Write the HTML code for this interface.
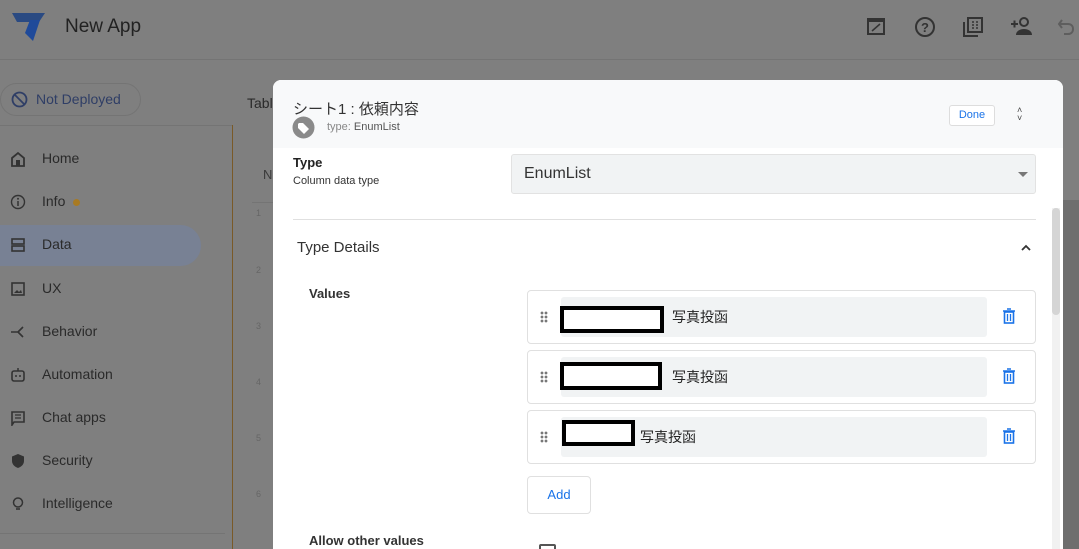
<!DOCTYPE html>
<html><head><meta charset="utf-8"><style>
*{box-sizing:border-box;margin:0;padding:0}
body{width:1079px;height:549px;overflow:hidden;background:#7f7f7f;font-family:"Liberation Sans","Noto Sans CJK JP",sans-serif;position:relative;color:#202124}
.abs{position:absolute}
.nav{position:absolute;left:42px;font-size:14px;color:#2a2a2a}
.ni{position:absolute;left:10px;width:16px;height:16px}
.card{position:absolute;left:527px;width:509px;height:54px;border:1px solid #e0e0e0;border-radius:4px;background:#fff}
.field{position:absolute;left:33px;top:6px;width:426px;height:40px;background:#f1f3f4;border-radius:3px}
.red{position:absolute;border:4px solid #000;background:#fff}
.jp{position:absolute;font-size:14px;color:#222;top:16px}
.dots{position:absolute;left:12px;top:20px;width:8px;height:12px;background-image:radial-gradient(circle,#777 1.3px,transparent 1.5px);background-size:4px 4px}
.trash{position:absolute;left:474px;top:17px}
</style></head><body>
<svg class="abs" style="left:12px;top:13px" width="34" height="30" viewBox="0 0 34 30"><path d="M0 0H33L27 9H5Z" fill="#2a4a82"/><path d="M18 7H28L21 28L13 20Z" fill="#1f4a9a"/></svg>
<div class="abs" style="left:65px;top:16px;font-size:19px;color:#222">New App</div>
<div class="abs" style="left:0;top:59px;width:1079px;height:1px;background:#747474"></div>
<svg class="abs" style="left:866px;top:16px" width="20" height="20"><rect x="2" y="3" width="16" height="15" fill="none" stroke="#333" stroke-width="2"/><rect x="2" y="3" width="16" height="3" fill="#333"/><path d="M6 15L14 8" stroke="#333" stroke-width="1.5"/></svg>
<svg class="abs" style="left:914px;top:16px" width="22" height="22"><circle cx="11" cy="11" r="9" fill="none" stroke="#333" stroke-width="2"/><text x="11" y="16" font-size="13" text-anchor="middle" fill="#333" font-family="Liberation Sans" font-weight="bold">?</text></svg>
<svg class="abs" style="left:962px;top:16px" width="22" height="22"><rect x="6" y="2" width="14" height="14" fill="none" stroke="#333" stroke-width="2"/><path d="M2 6V20H16" fill="none" stroke="#333" stroke-width="2"/><path d="M10 6h2M14 6h2M10 9h2M14 9h2M10 12h2M14 12h2" stroke="#333" stroke-width="1.5"/></svg>
<svg class="abs" style="left:1009px;top:16px" width="24" height="20"><path d="M2 8h7M5.5 4.5v7" stroke="#333" stroke-width="2"/><circle cx="15" cy="6" r="4" fill="none" stroke="#333" stroke-width="2"/><path d="M7 19c0-4 4-6 8-6s8 2 8 6z" fill="#333"/></svg>
<svg class="abs" style="left:1057px;top:17px" width="18" height="18"><path d="M5 3L2 7L5 11M2 7H11C14 7 16 9 16 12C16 15 14 17 11 17H7" fill="none" stroke="#5e5e5e" stroke-width="2"/></svg>
<div class="abs" style="left:0;top:83px;width:141px;height:33px;border:1px solid #747474;border-radius:17px"></div>
<svg class="abs" style="left:11px;top:91px" width="17" height="17"><circle cx="8.5" cy="8.5" r="7" fill="none" stroke="#2f3e66" stroke-width="1.8"/><path d="M3.5 3.5L13.5 13.5" stroke="#2f3e66" stroke-width="1.8"/></svg>
<div class="abs" style="left:36px;top:91px;font-size:14px;color:#2f3e66">Not Deployed</div>
<div class="abs" style="left:247px;top:95px;font-size:14px;color:#2a2a2a">Tabl</div>
<div class="abs" style="left:0;top:125px;width:232px;height:1px;background:#747474"></div>
<div class="abs" style="left:232px;top:125px;width:1px;height:424px;background:#7a5a28"></div>
<div class="abs" style="left:0;top:225px;width:201px;height:41px;background:#788194;border-radius:0 21px 21px 0"></div>
<div class="nav" style="top:150px">Home</div>
<div class="nav" style="top:193px">Info <span style="display:inline-block;width:7px;height:7px;border-radius:50%;background:#a87a22;margin-left:4px;vertical-align:middle"></span></div>
<div class="nav" style="top:236px">Data</div>
<div class="nav" style="top:280px">UX</div>
<div class="nav" style="top:323px">Behavior</div>
<div class="nav" style="top:366px">Automation</div>
<div class="nav" style="top:409px">Chat apps</div>
<div class="nav" style="top:452px">Security</div>
<div class="nav" style="top:495px">Intelligence</div>
<svg class="ni" style="top:151px"><path d="M2 7L8 2L14 7V15H2Z" fill="none" stroke="#333" stroke-width="1.8"/><rect x="6" y="9" width="4" height="6" fill="#333"/></svg>
<svg class="ni" style="top:194px"><circle cx="8" cy="8" r="6.5" fill="none" stroke="#333" stroke-width="1.4"/><path d="M8 7v5" stroke="#333" stroke-width="1.5"/><circle cx="8" cy="4.7" r="1" fill="#333"/></svg>
<svg class="ni" style="top:237px"><rect x="2" y="2" width="12" height="5" fill="none" stroke="#333" stroke-width="1.6"/><rect x="2" y="9" width="12" height="5" fill="none" stroke="#333" stroke-width="1.6"/></svg>
<svg class="ni" style="top:281px"><rect x="2" y="2" width="12" height="12" fill="none" stroke="#333" stroke-width="1.6"/><path d="M4 12L7 9L9 11L11 9L12 12Z" fill="#333"/></svg>
<svg class="ni" style="top:324px"><path d="M1 8H8M8 8L13 3M8 8L13 13" stroke="#333" stroke-width="1.6" fill="none"/></svg>
<svg class="ni" style="top:367px"><rect x="2" y="4" width="12" height="10" rx="2" fill="none" stroke="#333" stroke-width="1.6"/><circle cx="6" cy="9" r="1" fill="#333"/><circle cx="10" cy="9" r="1" fill="#333"/><path d="M8 1v3" stroke="#333" stroke-width="1.5"/></svg>
<svg class="ni" style="top:410px"><path d="M2 2H14V12H4L2 15Z" fill="none" stroke="#333" stroke-width="1.6"/><path d="M5 5h6M5 8h6" stroke="#333" stroke-width="1.3"/></svg>
<svg class="ni" style="top:453px"><path d="M8 1L14 3.5V8C14 11.5 11 14 8 15C5 14 2 11.5 2 8V3.5Z" fill="#333"/></svg>
<svg class="ni" style="top:496px"><circle cx="8" cy="6.5" r="4.5" fill="none" stroke="#333" stroke-width="1.5"/><path d="M6 13h4" stroke="#333" stroke-width="1.6"/></svg>
<div class="abs" style="left:0;top:533px;width:225px;height:1px;background:#747474"></div>
<div class="abs" style="left:263px;top:167px;font-size:13px;color:#3a3a3a">N</div>
<div class="abs" style="left:252px;top:202px;width:21px;height:1px;background:#747474"></div>
<div class="abs" style="left:256px;top:208px;font-size:9px;color:#666">1</div>
<div class="abs" style="left:256px;top:265px;font-size:9px;color:#666">2</div>
<div class="abs" style="left:256px;top:321px;font-size:9px;color:#666">3</div>
<div class="abs" style="left:256px;top:377px;font-size:9px;color:#666">4</div>
<div class="abs" style="left:256px;top:433px;font-size:9px;color:#666">5</div>
<div class="abs" style="left:256px;top:489px;font-size:9px;color:#666">6</div>
<div class="abs" style="left:1063px;top:200px;width:16px;height:349px;background:#6e6e6e"></div>
<div class="abs" style="left:273px;top:80px;width:790px;height:469px;background:#fff;border-radius:8px 8px 0 0;overflow:hidden">
 <div class="abs" style="left:0;top:0;width:790px;height:68px;background:#f8f9fa"></div>
 <div class="abs" style="left:20px;top:18px;font-size:15px;color:#333">シート1 : 依頼内容</div>
 <svg class="abs" style="left:19px;top:36px" width="23" height="23"><circle cx="11.5" cy="11.5" r="11" fill="#8a8a8a"/><path d="M6 8V12L12 18L17 13L11 7H7Z" fill="#fff"/></svg>
 <div class="abs" style="left:54px;top:41px;font-size:11px;color:#888">type: <span style="color:#555">EnumList</span></div>
 <div class="abs" style="left:676px;top:25px;width:46px;height:21px;border:1px solid #ddd;background:#fff;border-radius:3px;font-size:11px;color:#1a73e8;text-align:center;line-height:19px">Done</div>
 <div class="abs" style="left:744px;top:26px;font-size:9px;color:#444;line-height:8px;text-align:center">˄<br>˅</div>
 <div class="abs" style="left:20px;top:75px;font-size:13px;font-weight:bold;color:#222">Type</div>
 <div class="abs" style="left:20px;top:95px;font-size:11px;color:#333">Column data type</div>
 <div class="abs" style="left:238px;top:74px;width:525px;height:40px;background:#f1f3f4;border:1px solid #e2e2e2;border-radius:3px"></div>
 <div class="abs" style="left:251px;top:85px;font-size:16px;color:#333">EnumList</div>
 <div class="abs" style="left:745px;top:92px;width:0;height:0;border-left:5px solid transparent;border-right:5px solid transparent;border-top:5px solid #777"></div>
 <div class="abs" style="left:20px;top:139px;width:743px;height:1px;background:#e0e0e0"></div>
 <div class="abs" style="left:24px;top:159px;font-size:15px;color:#333">Type Details</div>
 <svg class="abs" style="left:747px;top:163px" width="12" height="8"><path d="M2 7L6 3L10 7" fill="none" stroke="#333" stroke-width="1.8"/></svg>
 <div class="abs" style="left:36px;top:206px;font-size:13px;font-weight:bold;color:#333">Values</div>
 <div class="abs" style="left:36px;top:453px;font-size:13px;font-weight:bold;color:#333">Allow other values</div>
 <div class="abs" style="left:266px;top:464px;width:17px;height:17px;border:2px solid #555;border-radius:2px"></div>
 <div class="abs" style="left:779px;top:128px;width:8px;height:341px;background:#f1f1f1"></div>
 <div class="abs" style="left:779px;top:128px;width:8px;height:107px;background:#d5d5d5;border-radius:4px"></div>
</div>
<div class="card" style="top:290px"><div class="dots"></div><div class="field"></div><div class="red" style="left:32px;top:15px;width:104px;height:27px"></div><div class="jp" style="left:144px">写真投函</div><svg class="trash" width="14" height="16"><path d="M1 3h12M5 1h4" stroke="#1a73e8" stroke-width="1.6"/><rect x="2.5" y="4" width="9" height="11" fill="none" stroke="#1a73e8" stroke-width="1.6"/><path d="M5.5 6v7M8.5 6v7" stroke="#1a73e8" stroke-width="1.3"/></svg></div>
<div class="card" style="top:350px"><div class="dots"></div><div class="field"></div><div class="red" style="left:32px;top:11px;width:102px;height:28px"></div><div class="jp" style="left:144px">写真投函</div><svg class="trash" width="14" height="16"><path d="M1 3h12M5 1h4" stroke="#1a73e8" stroke-width="1.6"/><rect x="2.5" y="4" width="9" height="11" fill="none" stroke="#1a73e8" stroke-width="1.6"/><path d="M5.5 6v7M8.5 6v7" stroke="#1a73e8" stroke-width="1.3"/></svg></div>
<div class="card" style="top:410px"><div class="dots"></div><div class="field"></div><div class="red" style="left:34px;top:9px;width:73px;height:26px"></div><div class="jp" style="left:112px">写真投函</div><svg class="trash" width="14" height="16"><path d="M1 3h12M5 1h4" stroke="#1a73e8" stroke-width="1.6"/><rect x="2.5" y="4" width="9" height="11" fill="none" stroke="#1a73e8" stroke-width="1.6"/><path d="M5.5 6v7M8.5 6v7" stroke="#1a73e8" stroke-width="1.3"/></svg></div>
<div class="abs" style="left:527px;top:476px;width:64px;height:38px;border:1px solid #e0e0e0;border-radius:4px;background:#fff;font-size:13px;color:#1a73e8;text-align:center;line-height:36px">Add</div>
</body></html>
